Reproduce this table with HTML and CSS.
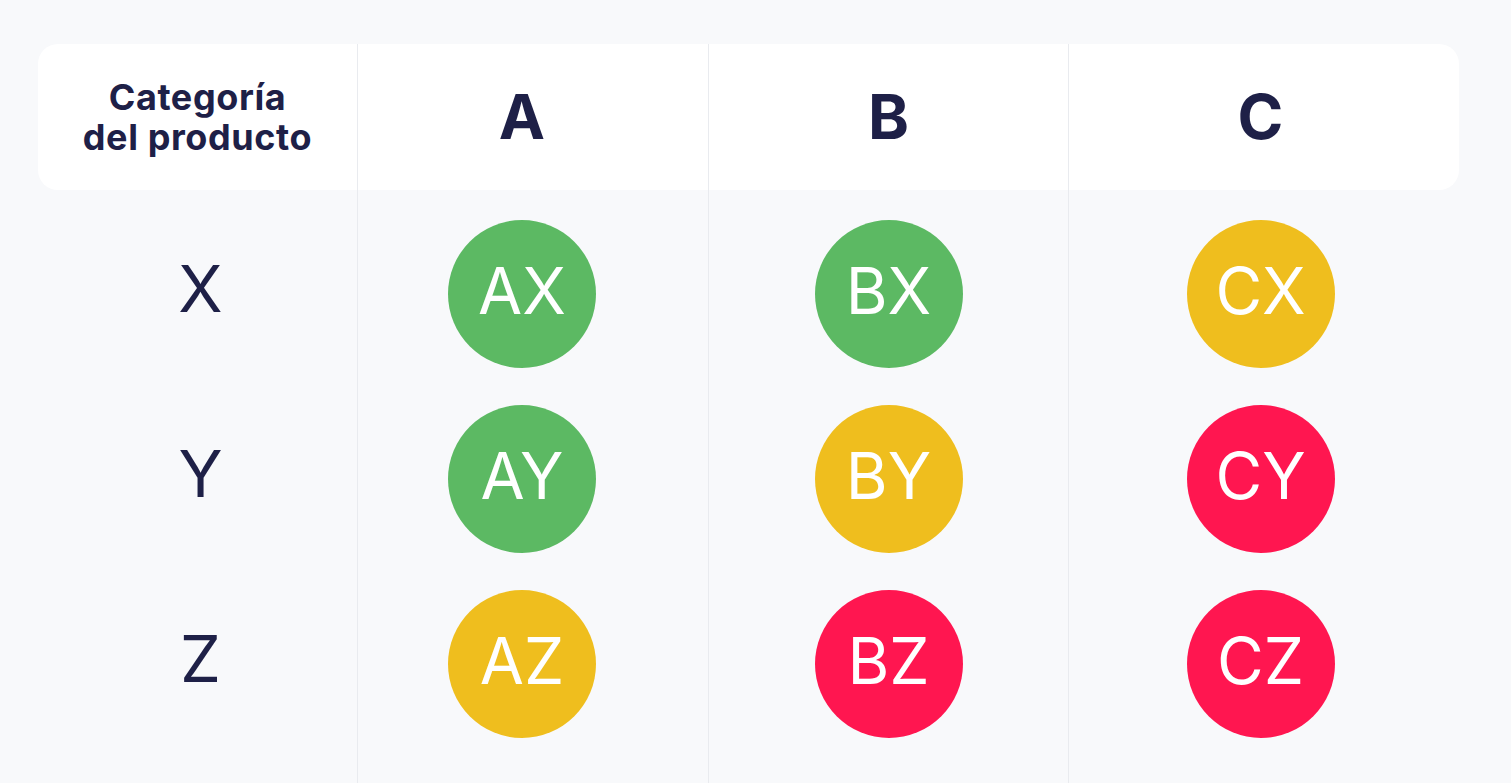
FILE: index.html
```html
<!DOCTYPE html>
<html lang="es">
<head>
<meta charset="utf-8">
<title>Matriz ABC-XYZ</title>
<link rel="stylesheet" href="styles.css">
</head>
<body>
<div class="matrix">
  <div class="col col-label">
    <div class="head head-first"><span class="head-text">Categoría<br>del producto</span></div>
    <div class="body">
      <div class="cell"><span class="row-label">X</span></div>
      <div class="cell"><span class="row-label">Y</span></div>
      <div class="cell"><span class="row-label">Z</span></div>
    </div>
  </div>
  <div class="col col-a">
    <div class="head"><span class="head-letter">A</span></div>
    <div class="body">
      <div class="cell"><span class="dot green">AX</span></div>
      <div class="cell"><span class="dot green">AY</span></div>
      <div class="cell"><span class="dot yellow">AZ</span></div>
    </div>
  </div>
  <div class="col col-b">
    <div class="head"><span class="head-letter">B</span></div>
    <div class="body">
      <div class="cell"><span class="dot green">BX</span></div>
      <div class="cell"><span class="dot yellow">BY</span></div>
      <div class="cell"><span class="dot red">BZ</span></div>
    </div>
  </div>
  <div class="col col-c">
    <div class="head head-last"><span class="head-letter">C</span></div>
    <div class="body">
      <div class="cell"><span class="dot yellow">CX</span></div>
      <div class="cell"><span class="dot red">CY</span></div>
      <div class="cell"><span class="dot red">CZ</span></div>
    </div>
  </div>
</div>
</body>
</html>
```

FILE: styles.css
```css
html, body {
  margin: 0;
  padding: 0;
  background: #f8f9fb;
  height: 100%;
  overflow: hidden;
}

body {
  font-family: Inter, "Noto Sans", sans-serif;
  color: #1e2047;
}

.matrix {
  display: grid;
  grid-template-columns: 319px 351px 360px 391px;
  margin: 44px 0 0 38px;
  height: 739px;
}

.col {
  display: flex;
  flex-direction: column;
}

.col-a, .col-b, .col-c {
  border-left: 1px solid #e9ebef;
}

.head {
  height: 146px;
  background: #ffffff;
  display: flex;
  align-items: center;
  justify-content: center;
}

.head-first {
  border-radius: 20px 0 0 20px;
}

.head-last {
  border-radius: 0 20px 20px 0;
}

.col-label .cell { padding-left: 6px; }
.col-a .head, .col-a .cell { padding-right: 22px; }
.col-c .head, .col-c .cell { padding-right: 7px; }

.head-text {
  font-weight: 700;
  font-size: 36px;
  line-height: 40px;
  text-align: center;
  letter-spacing: 0.6px;
  margin-top: 0;
}

.head-letter {
  font-weight: 700;
  font-size: 62px;
  line-height: 1;
}

.body {
  padding-top: 30px;
  display: flex;
  flex-direction: column;
}

.cell {
  height: 185px;
  display: flex;
  justify-content: center;
  align-items: flex-start;
}

.row-label {
  height: 148px;
  display: flex;
  align-items: center;
  font-size: 65px;
  font-weight: 400;
  line-height: 1;
  padding-bottom: 12px;
  box-sizing: border-box;
}

.dot {
  width: 148px;
  height: 148px;
  border-radius: 50%;
  display: flex;
  align-items: center;
  justify-content: center;
  color: #ffffff;
  font-size: 64px;
  font-weight: 400;
  line-height: 1;
  padding-bottom: 6px;
  box-sizing: border-box;
}

.green { background: #5cb963; }
.yellow { background: #efbe1e; }
.red { background: #ff1650; }
```
